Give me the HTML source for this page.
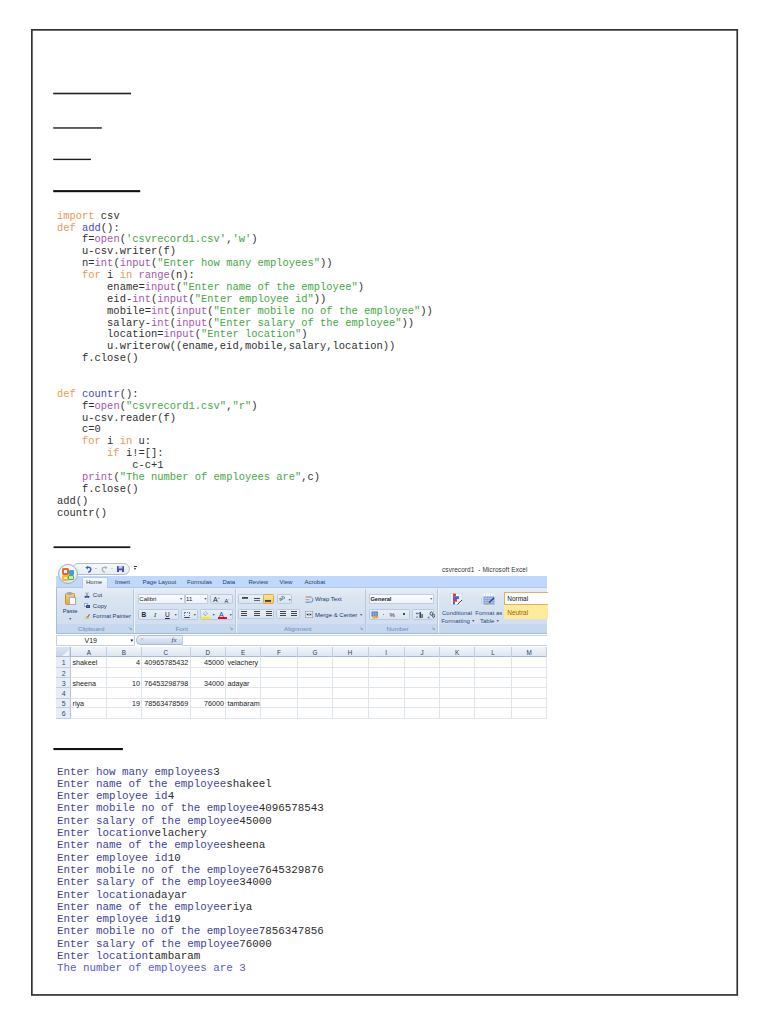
<!DOCTYPE html>
<html><head><meta charset="utf-8">
<style>
html,body{margin:0;padding:0;background:#fff;width:768px;height:1024px;overflow:hidden;position:relative}
.frame{position:absolute;left:31px;top:29px;width:703.7px;height:963.4px;border:1.7px solid #333}
.ul{position:absolute;left:53px;height:1px;background:#222}
pre{margin:0;position:absolute;white-space:pre;font-family:"Liberation Mono",monospace}
.code{left:57px;top:210.7px;font-size:10.45px;line-height:11.87px;color:#303030}
.out{left:57px;top:765.6px;font-size:10.85px;line-height:12.3px;color:#4242a0}
.k{color:#e89a52}.f{color:#4848c4}.b{color:#a458ac}.s{color:#44a844}
.i{color:#2c2c2c}
.last{color:#5858d0}

#xl{position:absolute;left:0;top:0;width:768px;height:1024px;font-family:"Liberation Sans",sans-serif;pointer-events:none}
#xl div{position:absolute;box-sizing:border-box}
#xl .t{white-space:nowrap;line-height:1;color:#1e3a66}
#xl .lbl{color:#6a8cc0;font-size:6.2px;white-space:nowrap;line-height:1}

</style></head><body>
<svg style="position:absolute;left:0;top:0" width="768" height="1024"><rect x="31.85" y="29.85" width="705.4" height="965.1" fill="none" stroke="#333" stroke-width="1.7"/></svg>
<svg style="position:absolute;left:0;top:0" width="768" height="1024">
<rect x="53.2" y="92.7" width="77.8" height="1.6" fill="#222"/>
<rect x="53.2" y="127" width="48.6" height="1.9" fill="#5a5a5a"/>
<rect x="53.2" y="158.7" width="37.7" height="1.4" fill="#1e1e1e"/>
<rect x="53.2" y="190.1" width="87" height="2.1" fill="#111"/>
<rect x="53.5" y="546.3" width="76.8" height="1.8" fill="#1a1a1a"/>
<rect x="53.4" y="748" width="69.5" height="2.1" fill="#111"/>
</svg>
<pre class="code"><span class="k">import</span> csv
<span class="k">def</span> <span class="f">add</span>():
    f=<span class="b">open</span>(<span class="s">'csvrecord1.csv'</span>,<span class="s">'w'</span>)
    u-csv.writer(f)
    n=<span class="b">int</span>(<span class="b">input</span>(<span class="s">"Enter how many employees"</span>))
    <span class="k">for</span> i <span class="k">in</span> <span class="b">range</span>(n):
        ename=<span class="b">input</span>(<span class="s">"Enter name of the employee"</span>)
        eid-<span class="b">int</span>(<span class="b">input</span>(<span class="s">"Enter employee id"</span>))
        mobile=<span class="b">int</span>(<span class="b">input</span>(<span class="s">"Enter mobile no of the employee"</span>))
        salary-<span class="b">int</span>(<span class="b">input</span>(<span class="s">"Enter salary of the employee"</span>))
        location=<span class="b">input</span>(<span class="s">"Enter location"</span>)
        u.writerow((ename,eid,mobile,salary,location))
    f.close()


<span class="k">def</span> <span class="f">countr</span>():
    f=<span class="b">open</span>(<span class="s">"csvrecord1.csv"</span>,<span class="s">"r"</span>)
    u-csv.reader(f)
    c=0
    <span class="k">for</span> i <span class="k">in</span> u:
        <span class="k">if</span> i!=[]:
            c-c+1
    <span class="b">print</span>(<span class="s">"The number of employees are"</span>,c)
    f.close()
add()
countr()</pre>

<div id="xl">
<!-- title -->
<div class="t" style="left:442px;top:566.8px;font-size:6.4px;color:#333;letter-spacing:0.12px">csvrecord1 &nbsp;- Microsoft Excel</div>
<!-- QAT pill -->
<div style="left:72px;top:563px;width:57.5px;height:11.5px;border-radius:6px;border:0.8px solid #b4c0cf;background:linear-gradient(#f6f8fb,#e6edf5)"></div>
<svg style="position:absolute;left:84.5px;top:565.5px" width="7" height="7" viewBox="0 0 7 7"><path d="M2 1.5 Q6 0.8 5.8 3.6 Q5.6 5.8 3.2 6.3" stroke="#3a62c0" stroke-width="1.5" fill="none"/><path d="M0.3 1.6 L3 0 L2.8 3.4 Z" fill="#3a62c0"/></svg>
<div style="left:94.6px;top:568.4px;width:0;height:0;border-left:1.2px solid transparent;border-right:1.2px solid transparent;border-top:1.5px solid #8090a8"></div>
<svg style="position:absolute;left:101px;top:565.5px" width="7" height="7" viewBox="0 0 7 7"><path d="M5 1.5 Q1 0.8 1.2 3.6 Q1.4 5.8 3.8 6.3" stroke="#a8b4c6" stroke-width="1.4" fill="none"/><path d="M6.7 1.6 L4 0 L4.2 3.4 Z" fill="#a8b4c6"/></svg>
<div style="left:111.3px;top:568.4px;width:0;height:0;border-left:1.2px solid transparent;border-right:1.2px solid transparent;border-top:1.5px solid #a0acbc"></div>
<svg style="position:absolute;left:117.3px;top:565.6px" width="7" height="6.5" viewBox="0 0 7 6.5"><rect x="0" y="0" width="7" height="6.5" rx="0.6" fill="#4a4ab8"/><rect x="1.6" y="0" width="3.8" height="2.6" fill="#c4c8f0"/><rect x="2" y="4.2" width="3" height="2.3" fill="#ffffff" opacity="0.85"/></svg>
<div style="left:133.8px;top:566.2px;width:3.2px;height:0.7px;background:#333"></div>
<div style="left:133.6px;top:568px;width:0;height:0;border-left:1.8px solid transparent;border-right:1.8px solid transparent;border-top:2.2px solid #333"></div>
<!-- tab bar -->
<div style="left:56px;top:575.6px;width:491px;height:12px;background:#bfd8fb;border-bottom:1px solid #b3c6de"></div>
<div style="left:82px;top:576.8px;width:25.5px;height:11.2px;background:linear-gradient(#f4f8fc,#e3ebf5);border:1px solid #b9cbe2;border-bottom:none;border-radius:2px 2px 0 0"></div>
<div class="t" style="left:86px;top:579px;font-size:6px;color:#2a3f66">Home</div>
<div class="t" style="left:115px;top:579px;font-size:6px;color:#2a3f66">Insert</div>
<div class="t" style="left:142.5px;top:579px;font-size:6px;color:#2a3f66">Page Layout</div>
<div class="t" style="left:187px;top:579px;font-size:6px;color:#2a3f66">Formulas</div>
<div class="t" style="left:222.5px;top:579px;font-size:6px;color:#2a3f66">Data</div>
<div class="t" style="left:248.5px;top:579px;font-size:6px;color:#2a3f66">Review</div>
<div class="t" style="left:279.5px;top:579px;font-size:6px;color:#2a3f66">View</div>
<div class="t" style="left:304.5px;top:579px;font-size:6px;color:#2a3f66">Acrobat</div>
<!-- office button -->
<div style="left:57.9px;top:563.9px;width:20px;height:20px;border-radius:50%;background:radial-gradient(circle at 50% 35%,#ffffff 0,#f2f6fa 45%,#d6e0ec 80%,#b8c6d8 100%);border:1px solid #a3b3c7;box-shadow:0 0 1px #c8d4e2"></div>
<div style="left:61.5px;top:568px;width:7px;height:6.8px;border:2px solid #e46a30;border-radius:1.5px;background:#e8f2f8"></div>
<div style="left:68.5px;top:569.6px;width:5.5px;height:5.3px;background:#3d9ee0;border-radius:1px"></div>
<div style="left:62px;top:574.6px;width:6.8px;height:6.4px;border:2px solid #f1bb2a;border-radius:1.5px;background:#f8f4e4"></div>
<div style="left:68.4px;top:574.6px;width:6px;height:5.8px;border:1.6px solid #5aae36;border-radius:1px;background:#cfe8b8"></div>
<!-- ribbon body -->
<div style="left:56px;top:588px;width:491px;height:46px;background:linear-gradient(#e6edf6 0px,#dbe5f1 9px,#d3dff0 30px,#d3dff0 100%);border-left:1px solid #a9bdd6;border-bottom:1.5px solid #a5b9d3"></div>
<!-- group label bars -->
<div style="left:57px;top:624px;width:76px;height:8.6px;background:#c5d8ef"></div>
<div style="left:134.5px;top:624px;width:100px;height:8.6px;background:#c5d8ef"></div>
<div style="left:237px;top:624px;width:127.5px;height:8.6px;background:#c5d8ef"></div>
<div style="left:366.5px;top:624px;width:70.5px;height:8.6px;background:#c5d8ef"></div>
<div style="left:438.5px;top:624px;width:108.5px;height:8.6px;background:#c5d8ef"></div>
<!-- separators -->
<div style="left:133px;top:589px;width:1.5px;height:44px;background:#eef3f9;border-left:0.5px solid #b7c9df"></div>
<div style="left:235px;top:589px;width:1.5px;height:44px;background:#eef3f9;border-left:0.5px solid #b7c9df"></div>
<div style="left:364.8px;top:589px;width:1.5px;height:44px;background:#eef3f9;border-left:0.5px solid #b7c9df"></div>
<div style="left:437px;top:589px;width:1.5px;height:44px;background:#eef3f9;border-left:0.5px solid #b7c9df"></div>

<!-- Clipboard contents -->
<div style="left:64.5px;top:593px;width:10.5px;height:11.5px;background:linear-gradient(#f8d070,#e8a838);border-radius:1.5px;border:0.5px solid #c89030"></div>
<div style="left:67px;top:592px;width:5px;height:2.5px;background:#a0a8b8;border-radius:1px"></div>
<div style="left:68.5px;top:597px;width:7px;height:8px;background:#fdfdfd;border:0.5px solid #aab"></div>
<div class="t" style="left:62.7px;top:608.8px;font-size:5.8px">Paste</div>
<div class="t" style="left:68.5px;top:618px;font-size:3.5px;color:#556">&#9660;</div>
<svg style="position:absolute;left:84px;top:592.3px" width="6" height="6" viewBox="0 0 6 6"><path d="M1.8 0.3 L3 3.2 L4.2 0.3" stroke="#6a7fa8" stroke-width="0.7" fill="none"/><path d="M3 3 L1.2 5.6 L4.8 5.6 Z" fill="#3a5a9a"/><circle cx="1.6" cy="4.8" r="1.1" fill="#34508e"/><circle cx="4.4" cy="4.8" r="1.1" fill="#34508e"/></svg>
<div class="t" style="left:92.8px;top:592px;font-size:6px">Cut</div>
<div style="left:84px;top:602.8px;width:4px;height:4.2px;border:0.5px solid #9aaac4;background:#fbfcfe"></div>
<div style="left:86px;top:604.8px;width:3.8px;height:3px;border:0.5px solid #2c4a86;background:#5a78b0"></div>
<div class="t" style="left:92.8px;top:602.5px;font-size:6px">Copy</div>
<div style="left:84.5px;top:615.6px;width:4px;height:3.4px;background:radial-gradient(#f8e070,#d8b030);border-radius:50%"></div>
<div style="left:88.2px;top:613.6px;width:1.2px;height:4px;background:#6a5aa0;transform:rotate(35deg)"></div>
<div class="t" style="left:92.8px;top:613.5px;font-size:5.75px">Format Painter</div>

<!-- Font group contents -->
<div style="left:137.5px;top:594px;width:47px;height:10px;background:linear-gradient(#fbfcfe,#eef3f9);border:0.5px solid #c0cfe2"></div>
<div class="t" style="left:139.3px;top:595.6px;font-size:6px;color:#222">Calibri</div>
<div class="t" style="left:179.5px;top:598.2px;font-size:3.4px;color:#556">&#9660;</div>
<div style="left:184.5px;top:594px;width:23.5px;height:10px;background:linear-gradient(#fbfcfe,#eef3f9);border:0.5px solid #c0cfe2"></div>
<div class="t" style="left:186px;top:595.6px;font-size:6px;color:#222">11</div>
<div class="t" style="left:203.8px;top:598.2px;font-size:3.4px;color:#556">&#9660;</div>
<div style="left:210px;top:594px;width:22.5px;height:9.5px;background:linear-gradient(#e9eff7,#d9e4f1);border:0.5px solid #b9cae0;border-radius:1.5px"></div>
<div class="t" style="left:213px;top:596px;font-size:7px;color:#223">A<sup style="font-size:3.5px">+</sup></div>
<div class="t" style="left:224.5px;top:597.5px;font-size:5.5px;color:#223">A<sup style="font-size:3px">-</sup></div>
<div style="left:137.5px;top:609px;width:41px;height:10.5px;background:linear-gradient(#e9eff7,#d9e4f1);border:0.5px solid #b9cae0;border-radius:1.5px"></div>
<div class="t" style="left:141.5px;top:611.5px;font-size:6.5px;color:#223;font-weight:bold">B</div>
<div class="t" style="left:154px;top:611.5px;font-size:6.5px;color:#223;font-style:italic;font-family:'Liberation Serif'">I</div>
<div class="t" style="left:165px;top:611.5px;font-size:6.5px;color:#223;text-decoration:underline">U</div>
<div class="t" style="left:174px;top:613.7px;font-size:3.4px;color:#556">&#9660;</div>
<div style="left:180.5px;top:609px;width:17px;height:10.5px;background:linear-gradient(#e9eff7,#d9e4f1);border:0.5px solid #b9cae0;border-radius:1.5px"></div>
<div style="left:183.5px;top:611.5px;width:6.5px;height:6px;border:0.6px dotted #6a7a95;border-bottom:1px solid #445"></div>
<div class="t" style="left:193px;top:613.7px;font-size:3.4px;color:#556">&#9660;</div>
<div style="left:199.5px;top:609px;width:33px;height:10.5px;background:linear-gradient(#e9eff7,#d9e4f1);border:0.5px solid #b9cae0;border-radius:1.5px"></div>
<div class="t" style="left:203px;top:610.5px;font-size:5.5px;color:#445">&#x25C7;</div>
<div style="left:201px;top:617px;width:9px;height:2px;background:#ffef00"></div>
<div class="t" style="left:212px;top:613.7px;font-size:3.4px;color:#556">&#9660;</div>
<div class="t" style="left:219px;top:610.5px;font-size:7px;color:#2a3a9a">A</div>
<div style="left:217.8px;top:617px;width:9px;height:1.8px;background:#e01010"></div>
<div class="t" style="left:229px;top:613.7px;font-size:3.4px;color:#556">&#9660;</div>

<!-- Alignment contents -->
<div style="left:238.3px;top:594px;width:36px;height:10px;background:linear-gradient(#e9eff7,#d9e4f1);border:0.5px solid #b9cae0;border-radius:1.5px"></div>
<div style="left:242px;top:596.5px;width:6px;height:1px;background:#444"></div><div style="left:242px;top:598px;width:6px;height:1px;background:#666"></div>
<div style="left:253.5px;top:598px;width:6px;height:1px;background:#444"></div><div style="left:253.5px;top:599.5px;width:6px;height:1px;background:#666"></div>
<div style="left:262.5px;top:594px;width:11.7px;height:10px;background:linear-gradient(#fde9a6,#f8c55a);border:0.5px solid #e0a848;border-radius:1.5px"></div>
<div style="left:265px;top:599.5px;width:6px;height:1px;background:#444"></div><div style="left:265px;top:601px;width:6px;height:1px;background:#555"></div>
<div style="left:276.9px;top:594px;width:15.5px;height:10px;background:linear-gradient(#e9eff7,#d9e4f1);border:0.5px solid #b9cae0;border-radius:1.5px"></div>
<div class="t" style="left:279px;top:596px;font-size:5.5px;color:#445;transform:rotate(-30deg)">ab</div>
<div class="t" style="left:288px;top:598.7px;font-size:3.4px;color:#556">&#9660;</div>
<div style="left:238.3px;top:608.5px;width:36px;height:10.5px;background:linear-gradient(#e9eff7,#d9e4f1);border:0.5px solid #b9cae0;border-radius:1.5px"></div>
<div style="left:241px;top:611px;width:6px;height:5px;background:repeating-linear-gradient(#444 0 1px,transparent 1px 2px)"></div>
<div style="left:253.5px;top:611px;width:6px;height:5px;background:repeating-linear-gradient(#444 0 1px,transparent 1px 2px)"></div>
<div style="left:266px;top:611px;width:6px;height:5px;background:repeating-linear-gradient(#444 0 1px,transparent 1px 2px)"></div>
<div style="left:276px;top:608.5px;width:23.5px;height:10.5px;background:linear-gradient(#e9eff7,#d9e4f1);border:0.5px solid #b9cae0;border-radius:1.5px"></div>
<div style="left:279.5px;top:611px;width:6px;height:5px;background:repeating-linear-gradient(#444 0 1px,transparent 1px 2px)"></div>
<div style="left:291px;top:611px;width:6px;height:5px;background:repeating-linear-gradient(#444 0 1px,transparent 1px 2px)"></div>
<svg style="position:absolute;left:304.5px;top:595.5px" width="9" height="8" viewBox="0 0 9 8"><rect x="0.5" y="0.5" width="6" height="1" fill="#8a8a8a"/><rect x="0.5" y="3" width="4" height="1.2" fill="#e0a080"/><path d="M0.5 6.2 H5.5 Q8 6.2 8 3.8 Q8 2 6.5 2" stroke="#4a8ad0" stroke-width="1" fill="none"/></svg>
<div class="t" style="left:315px;top:596px;font-size:6px">Wrap Text</div>
<svg style="position:absolute;left:305px;top:610.5px" width="8" height="7" viewBox="0 0 8 7"><rect x="0.3" y="0.3" width="7.4" height="6.4" fill="#eef2f8" stroke="#8a98b0" stroke-width="0.6"/><path d="M0.3 2.3 H7.7 M0.3 4.7 H7.7" stroke="#a8b4c8" stroke-width="0.5"/><path d="M1.2 3.5 L3.4 2.4 V4.6 Z M6.8 3.5 L4.6 2.4 V4.6 Z" fill="#223"/></svg>
<div class="t" style="left:315px;top:611.6px;font-size:6px">Merge &amp; Center</div><div class="t" style="left:359.5px;top:613.5px;font-size:3.4px;color:#556">&#9660;</div>

<!-- Number contents -->
<div style="left:369px;top:594.2px;width:65px;height:9.7px;background:linear-gradient(#fbfcfe,#eef3f9);border:0.5px solid #c0cfe2"></div>
<div class="t" style="left:370.5px;top:596.5px;font-size:5.6px;color:#222;font-weight:bold">General</div>
<div class="t" style="left:429.5px;top:598.2px;font-size:3.4px;color:#556">&#9660;</div>
<div style="left:369px;top:609px;width:40.5px;height:10.5px;background:linear-gradient(#e9eff7,#d9e4f1);border:0.5px solid #b9cae0;border-radius:1.5px"></div>
<svg style="position:absolute;left:371px;top:610.6px" width="8" height="8" viewBox="0 0 8 8"><rect x="0.5" y="0.5" width="6.5" height="5" fill="#4a70c8"/><path d="M0.5 2.2H7 M0.5 3.9H7 M2.6 0.5V5.5 M4.8 0.5V5.5" stroke="#b8c8ee" stroke-width="0.5"/><circle cx="3" cy="6.3" r="1.5" fill="#f0b428"/><circle cx="5.6" cy="5.8" r="1.5" fill="#e8a020"/></svg>
<div style="left:382.5px;top:614px;width:1.6px;height:0.7px;background:#7a8aa0"></div>
<div class="t" style="left:389.5px;top:611.5px;font-size:6px;color:#223">%</div>
<div style="left:403.3px;top:613.2px;width:1.6px;height:1.6px;border-radius:50%;background:#223"></div>
<div style="left:411.8px;top:609px;width:22.5px;height:10.5px;background:linear-gradient(#e9eff7,#d9e4f1);border:0.5px solid #b9cae0;border-radius:1.5px"></div>
<svg style="position:absolute;left:414.5px;top:610.5px" width="8" height="8" viewBox="0 0 8 8"><path d="M0.5 2.5 L2.5 1.2 V3.8 Z" fill="#3a6ad0"/><path d="M2.5 2.5 H4" stroke="#3a6ad0" stroke-width="0.8"/><rect x="4.5" y="1" width="1.4" height="6" fill="#333"/><rect x="6.4" y="3" width="1.4" height="4" fill="#555"/><rect x="1.5" y="5.5" width="1" height="1.2" fill="#333"/></svg>
<svg style="position:absolute;left:426.5px;top:610.5px" width="8" height="8" viewBox="0 0 8 8"><path d="M0.3 6.5 L2.3 5.2 V7.8 Z" fill="#3a6ad0"/><ellipse cx="4.3" cy="2.6" rx="1.2" ry="1.8" stroke="#333" stroke-width="0.8" fill="none"/><ellipse cx="6.6" cy="4.8" rx="1.1" ry="1.7" stroke="#444" stroke-width="0.8" fill="none"/></svg>

<!-- Styles contents -->
<svg style="position:absolute;left:450.2px;top:592.8px" width="13" height="12" viewBox="0 0 13 12"><rect x="0.5" y="0.5" width="11.5" height="11" fill="#f6f8fb" stroke="#c8d0dc" stroke-width="0.5"/><path d="M0.5 3.3H12 M0.5 6H12 M0.5 8.7H12 M3 0.5V11.5 M9 0.5V11.5" stroke="#d0d6e0" stroke-width="0.5"/><rect x="3" y="0.6" width="3" height="2.7" fill="#e23a2a"/><rect x="3" y="3.3" width="6" height="2.7" fill="#3a6ad8"/><rect x="3" y="6" width="4" height="2.7" fill="#e23a2a"/><rect x="3" y="8.7" width="2" height="2.7" fill="#3a6ad8"/><path d="M7.5 11.5 L12 7" stroke="#444" stroke-width="1"/></svg>
<svg style="position:absolute;left:481.2px;top:592.8px" width="14" height="12" viewBox="0 0 14 12"><rect x="2.5" y="0.5" width="11" height="3" fill="#fff"/><path d="M4.5 0.5V3.5 M7 0.5V3.5 M9.5 0.5V3.5 M12 0.5V3.5" stroke="#b8c4d8" stroke-width="0.6"/><rect x="2.5" y="3.5" width="11" height="8" fill="#7a9ee0"/><path d="M2.5 5.5H13.5 M2.5 7.5H13.5 M2.5 9.5H13.5 M5 3.5V11.5 M8 3.5V11.5 M11 3.5V11.5" stroke="#c8d6f2" stroke-width="0.5"/><path d="M0.5 5 V11" stroke="#c8d0dc" stroke-width="1"/><path d="M6 11.5 L13 5" stroke="#3a3a6a" stroke-width="1.2"/><path d="M6 11.5 L8 9.7" stroke="#e8c030" stroke-width="1.6"/></svg>
<div class="t" style="left:442px;top:610px;font-size:6px;color:#2a4a80">Conditional</div>
<div class="t" style="left:441.2px;top:617.5px;font-size:6px;color:#2a4a80">Formatting <span style="font-size:3.4px;vertical-align:1px">&#9660;</span></div>
<div class="t" style="left:475.3px;top:610px;font-size:6px;color:#2a4a80">Format as</div>
<div class="t" style="left:480px;top:617.5px;font-size:6px;color:#2a4a80">Table <span style="font-size:3.4px;vertical-align:1px">&#9660;</span></div>
<div style="left:503.5px;top:592.3px;width:44px;height:13px;background:#fff;border:1px solid #e0b060;border-right:none"></div>
<div class="t" style="left:507.2px;top:596px;font-size:6.5px;color:#111">Normal</div>
<div style="left:503.5px;top:605.3px;width:44px;height:13.3px;background:#ffeb9c"></div>
<div class="t" style="left:507.2px;top:609.5px;font-size:6.5px;color:#9c6500">Neutral</div>
<div class="lbl" style="left:78px;top:625.5px">Clipboard</div>
<div class="lbl" style="left:175.5px;top:625.5px">Font</div>
<div class="lbl" style="left:284px;top:625.5px">Alignment</div>
<div class="lbl" style="left:386.5px;top:625.5px">Number</div>
<div class="t" style="left:128px;top:625.5px;font-size:5px;color:#6a7fa0">&#x2198;</div>
<div class="t" style="left:228.5px;top:625.5px;font-size:5px;color:#6a7fa0">&#x2198;</div>
<div class="t" style="left:358.5px;top:625.5px;font-size:5px;color:#6a7fa0">&#x2198;</div>
<div class="t" style="left:431px;top:625.5px;font-size:5px;color:#6a7fa0">&#x2198;</div>

<!-- formula bar -->
<div style="left:56px;top:634.7px;width:491px;height:12px;background:#fff;border-top:0.8px solid #dfe7f1"></div>
<div style="left:56px;top:635.4px;width:78.6px;height:10.6px;background:#fff;border:0.6px solid #c3d2e6"></div>
<div class="t" style="left:84.5px;top:637.3px;font-size:7px;color:#222">V19</div>
<div class="t" style="left:129.5px;top:638.6px;font-size:4.6px;color:#111">&#9660;</div>
<div style="left:136.4px;top:635.3px;width:45.5px;height:10.2px;background:linear-gradient(#edf2f8,#c4d5ea);border:0.6px solid #a9bcd6;border-right:none;border-radius:5px 0 0 5px"></div>
<div class="t" style="left:140px;top:637px;font-size:5px;color:#e0a0a0">&#x2715;</div>
<div class="t" style="left:171.5px;top:636.5px;font-size:7px;color:#445;font-style:italic;font-family:'Liberation Serif'">fx</div>
<div style="left:181.9px;top:635.3px;width:365px;height:10.6px;background:#fff;border:0.6px solid #c3d2e6;border-right:none"></div>
<!-- grid -->
<div style="left:56px;top:647px;width:491px;height:71px;background:#fff"></div>
<div style="left:56px;top:647px;width:491px;height:10px;background:linear-gradient(#f1f5fa,#dde6f1);border-bottom:0.7px solid #a9bdd4"></div>
<div style="left:56px;top:657px;width:15.2px;height:61px;background:#e6edf6;border-right:0.7px solid #b3c5da"></div>
<div style="left:56px;top:647px;width:15.2px;height:10px;background:linear-gradient(#d9e4f2,#c5d5ea);border-right:0.7px solid #a9bdd4;border-bottom:0.7px solid #a9bdd4"></div>
<div style="left:62px;top:649.5px;width:0;height:0;border-left:7px solid transparent;border-bottom:6px solid #eef3f9"></div>
<div style="left:106.3px;top:647px;width:0.8px;height:10px;background:#c2cfdf"></div>
<div class="t" style="left:71.2px;top:650.0px;width:35.5px;text-align:center;font-size:6.3px;color:#27415f">A</div>
<div style="left:106.3px;top:657px;width:0.7px;height:61px;background:#e0e5ec"></div>
<div style="left:140.8px;top:647px;width:0.8px;height:10px;background:#c2cfdf"></div>
<div class="t" style="left:106.7px;top:650.0px;width:34.5px;text-align:center;font-size:6.3px;color:#27415f">B</div>
<div style="left:140.8px;top:657px;width:0.7px;height:61px;background:#e0e5ec"></div>
<div style="left:189.8px;top:647px;width:0.8px;height:10px;background:#c2cfdf"></div>
<div class="t" style="left:141.2px;top:650.0px;width:49.0px;text-align:center;font-size:6.3px;color:#27415f">C</div>
<div style="left:189.8px;top:657px;width:0.7px;height:61px;background:#e0e5ec"></div>
<div style="left:225.2px;top:647px;width:0.8px;height:10px;background:#c2cfdf"></div>
<div class="t" style="left:190.2px;top:650.0px;width:35.4px;text-align:center;font-size:6.3px;color:#27415f">D</div>
<div style="left:225.2px;top:657px;width:0.7px;height:61px;background:#e0e5ec"></div>
<div style="left:260.1px;top:647px;width:0.8px;height:10px;background:#c2cfdf"></div>
<div class="t" style="left:225.6px;top:650.0px;width:34.9px;text-align:center;font-size:6.3px;color:#27415f">E</div>
<div style="left:260.1px;top:657px;width:0.7px;height:61px;background:#e0e5ec"></div>
<div style="left:297.0px;top:647px;width:0.8px;height:10px;background:#c2cfdf"></div>
<div class="t" style="left:260.5px;top:650.0px;width:36.9px;text-align:center;font-size:6.3px;color:#27415f">F</div>
<div style="left:297.0px;top:657px;width:0.7px;height:61px;background:#e0e5ec"></div>
<div style="left:331.9px;top:647px;width:0.8px;height:10px;background:#c2cfdf"></div>
<div class="t" style="left:297.4px;top:650.0px;width:34.9px;text-align:center;font-size:6.3px;color:#27415f">G</div>
<div style="left:331.9px;top:657px;width:0.7px;height:61px;background:#e0e5ec"></div>
<div style="left:367.5px;top:647px;width:0.8px;height:10px;background:#c2cfdf"></div>
<div class="t" style="left:332.3px;top:650.0px;width:35.6px;text-align:center;font-size:6.3px;color:#27415f">H</div>
<div style="left:367.5px;top:657px;width:0.7px;height:61px;background:#e0e5ec"></div>
<div style="left:404.0px;top:647px;width:0.8px;height:10px;background:#c2cfdf"></div>
<div class="t" style="left:367.9px;top:650.0px;width:36.5px;text-align:center;font-size:6.3px;color:#27415f">I</div>
<div style="left:404.0px;top:657px;width:0.7px;height:61px;background:#e0e5ec"></div>
<div style="left:439.2px;top:647px;width:0.8px;height:10px;background:#c2cfdf"></div>
<div class="t" style="left:404.4px;top:650.0px;width:35.2px;text-align:center;font-size:6.3px;color:#27415f">J</div>
<div style="left:439.2px;top:657px;width:0.7px;height:61px;background:#e0e5ec"></div>
<div style="left:474.1px;top:647px;width:0.8px;height:10px;background:#c2cfdf"></div>
<div class="t" style="left:439.6px;top:650.0px;width:34.9px;text-align:center;font-size:6.3px;color:#27415f">K</div>
<div style="left:474.1px;top:657px;width:0.7px;height:61px;background:#e0e5ec"></div>
<div style="left:511.3px;top:647px;width:0.8px;height:10px;background:#c2cfdf"></div>
<div class="t" style="left:474.5px;top:650.0px;width:37.2px;text-align:center;font-size:6.3px;color:#27415f">L</div>
<div style="left:511.3px;top:657px;width:0.7px;height:61px;background:#e0e5ec"></div>
<div style="left:546.4px;top:647px;width:0.8px;height:10px;background:#c2cfdf"></div>
<div class="t" style="left:511.7px;top:650.0px;width:35.1px;text-align:center;font-size:6.3px;color:#27415f">M</div>
<div style="left:546.4px;top:657px;width:0.7px;height:61px;background:#e0e5ec"></div>
<div style="left:56px;top:667.00px;width:15.2px;height:0.7px;background:#c0cee0"></div>
<div style="left:71.2px;top:667.00px;width:475.6px;height:0.7px;background:#e0e5ec"></div>
<div class="t" style="left:56px;top:659.30px;width:15.2px;text-align:center;font-size:7px;color:#3a4a68">1</div>
<div style="left:56px;top:677.20px;width:15.2px;height:0.7px;background:#c0cee0"></div>
<div style="left:71.2px;top:677.20px;width:475.6px;height:0.7px;background:#e0e5ec"></div>
<div class="t" style="left:56px;top:669.70px;width:15.2px;text-align:center;font-size:7px;color:#3a4a68">2</div>
<div style="left:56px;top:687.40px;width:15.2px;height:0.7px;background:#c0cee0"></div>
<div style="left:71.2px;top:687.40px;width:475.6px;height:0.7px;background:#e0e5ec"></div>
<div class="t" style="left:56px;top:679.90px;width:15.2px;text-align:center;font-size:7px;color:#3a4a68">3</div>
<div style="left:56px;top:697.60px;width:15.2px;height:0.7px;background:#c0cee0"></div>
<div style="left:71.2px;top:697.60px;width:475.6px;height:0.7px;background:#e0e5ec"></div>
<div class="t" style="left:56px;top:690.10px;width:15.2px;text-align:center;font-size:7px;color:#3a4a68">4</div>
<div style="left:56px;top:707.30px;width:15.2px;height:0.7px;background:#c0cee0"></div>
<div style="left:71.2px;top:707.30px;width:475.6px;height:0.7px;background:#e0e5ec"></div>
<div class="t" style="left:56px;top:700.30px;width:15.2px;text-align:center;font-size:7px;color:#3a4a68">5</div>
<div style="left:56px;top:717.70px;width:15.2px;height:0.7px;background:#c0cee0"></div>
<div style="left:71.2px;top:717.70px;width:475.6px;height:0.7px;background:#e0e5ec"></div>
<div class="t" style="left:56px;top:710.00px;width:15.2px;text-align:center;font-size:7px;color:#3a4a68">6</div>
<div class="t" style="left:72.5px;top:659.20px;font-size:7.2px;color:#1a1a1a">shakeel</div>
<div class="t" style="left:106.7px;width:33.3px;text-align:right;top:659.20px;font-size:7.2px;color:#1a1a1a">4</div>
<div class="t" style="left:144.2px;top:659.20px;font-size:7.2px;color:#1a1a1a">40965785432</div>
<div class="t" style="left:190.2px;width:33.8px;text-align:right;top:659.20px;font-size:7.2px;color:#1a1a1a">45000</div>
<div class="t" style="left:227.4px;top:659.20px;font-size:7.2px;color:#1a1a1a">velachery</div>
<div class="t" style="left:72.5px;top:679.80px;font-size:7.2px;color:#1a1a1a">sheena</div>
<div class="t" style="left:106.7px;width:33.3px;text-align:right;top:679.80px;font-size:7.2px;color:#1a1a1a">10</div>
<div class="t" style="left:144.2px;top:679.80px;font-size:7.2px;color:#1a1a1a">76453298798</div>
<div class="t" style="left:190.2px;width:33.8px;text-align:right;top:679.80px;font-size:7.2px;color:#1a1a1a">34000</div>
<div class="t" style="left:227.4px;top:679.80px;font-size:7.2px;color:#1a1a1a">adayar</div>
<div class="t" style="left:72.5px;top:700.20px;font-size:7.2px;color:#1a1a1a">riya</div>
<div class="t" style="left:106.7px;width:33.3px;text-align:right;top:700.20px;font-size:7.2px;color:#1a1a1a">19</div>
<div class="t" style="left:144.2px;top:700.20px;font-size:7.2px;color:#1a1a1a">78563478569</div>
<div class="t" style="left:190.2px;width:33.8px;text-align:right;top:700.20px;font-size:7.2px;color:#1a1a1a">76000</div>
<div class="t" style="left:227.4px;top:700.20px;font-size:7.2px;color:#1a1a1a">tambaram</div>
</div>

<pre class="out">Enter how many employees<span class="i">3</span>
Enter name of the employee<span class="i">shakeel</span>
Enter employee id<span class="i">4</span>
Enter mobile no of the employee<span class="i">4096578543</span>
Enter salary of the employee<span class="i">45000</span>
Enter location<span class="i">velachery</span>
Enter name of the employee<span class="i">sheena</span>
Enter employee id<span class="i">10</span>
Enter mobile no of the employee<span class="i">7645329876</span>
Enter salary of the employee<span class="i">34000</span>
Enter location<span class="i">adayar</span>
Enter name of the employee<span class="i">riya</span>
Enter employee id<span class="i">19</span>
Enter mobile no of the employee<span class="i">7856347856</span>
Enter salary of the employee<span class="i">76000</span>
Enter location<span class="i">tambaram</span>
<span class="last">The number of employees are 3</span></pre>
</body></html>
